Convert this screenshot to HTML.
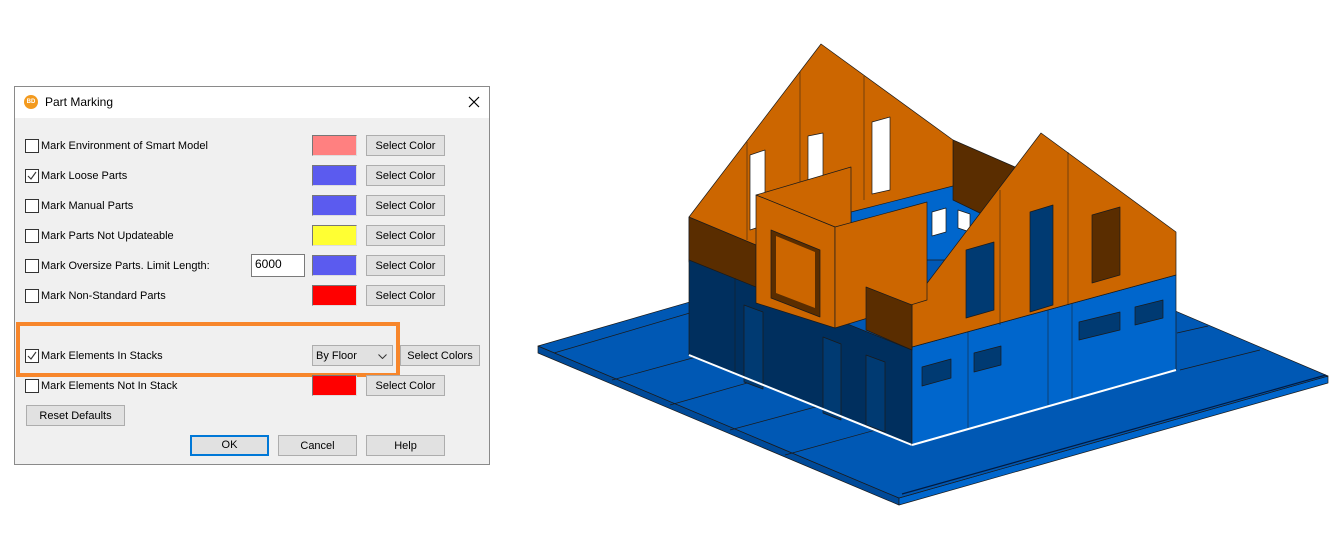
<!DOCTYPE html>
<html><head><meta charset="utf-8"><style>
body{margin:0;width:1338px;height:553px;background:#fff;position:relative;overflow:hidden;font-family:"Liberation Sans",sans-serif;font-size:11px;color:#000}
.a{position:absolute}
.dlg{left:14px;top:86px;width:476px;height:379px;background:#f0f0f0;border:1px solid #8a8a8a;box-sizing:border-box}
.tb{left:0;top:0;width:474px;height:31px;background:#fff}
.cb{width:12px;height:12px;border:1px solid #333;background:#fff}
.sw{width:43px;height:19px;border:1px solid #777;border-right-color:#ddd;border-bottom-color:#ddd}
.btn{height:21px;border:1px solid #adadad;background:#e1e1e1;text-align:center;line-height:20px;box-sizing:border-box}
.lbl{line-height:14px}
</style></head><body>
<div class="a dlg">
 <div class="a tb"></div>
 <div class="a" style="left:9px;top:8px;width:14px;height:14px;border-radius:50%;background:#f39a1e;color:#fff;font-size:6px;font-weight:bold;text-align:center;line-height:14px">BD</div>
 <div class="a" style="left:30px;top:8px;font-size:12px">Part Marking</div>
 <svg class="a" style="left:453px;top:9px" width="12" height="12"><path d="M1 1L11 11M11 1L1 11" stroke="#000" stroke-width="1.2"/></svg>
</div>
<div class="a cb" style="left:25px;top:139px"></div><div class="a lbl" style="left:41px;top:139px">Mark Environment of Smart Model</div>
<div class="a sw" style="left:312px;top:135px;background:#ff8080"></div><div class="a btn" style="left:366px;top:135px;width:79px">Select Color</div>
<div class="a cb" style="left:25px;top:169px"><svg width="12" height="12" style="position:absolute;left:0;top:0"><path d="M2 6L5 9L10 2" stroke="#333" fill="none" stroke-width="1.1"/></svg></div><div class="a lbl" style="left:41px;top:169px">Mark Loose Parts</div>
<div class="a sw" style="left:312px;top:165px;background:#5b5bef"></div><div class="a btn" style="left:366px;top:165px;width:79px">Select Color</div>
<div class="a cb" style="left:25px;top:199px"></div><div class="a lbl" style="left:41px;top:199px">Mark Manual Parts</div>
<div class="a sw" style="left:312px;top:195px;background:#5b5bef"></div><div class="a btn" style="left:366px;top:195px;width:79px">Select Color</div>
<div class="a cb" style="left:25px;top:229px"></div><div class="a lbl" style="left:41px;top:229px">Mark Parts Not Updateable</div>
<div class="a sw" style="left:312px;top:225px;background:#ffff33"></div><div class="a btn" style="left:366px;top:225px;width:79px">Select Color</div>
<div class="a cb" style="left:25px;top:259px"></div><div class="a lbl" style="left:41px;top:259px">Mark Oversize Parts. Limit Length:</div>
<div class="a" style="left:251px;top:254px;width:54px;height:23px;background:#fff;border:1px solid #7a7a7a;box-sizing:border-box;padding:2px 3px;font-size:12px">6000</div>
<div class="a sw" style="left:312px;top:255px;background:#5b5bef"></div><div class="a btn" style="left:366px;top:255px;width:79px">Select Color</div>
<div class="a cb" style="left:25px;top:289px"></div><div class="a lbl" style="left:41px;top:289px">Mark Non-Standard Parts</div>
<div class="a sw" style="left:312px;top:285px;background:#ff0000"></div><div class="a btn" style="left:366px;top:285px;width:79px">Select Color</div>
<div class="a" style="left:16px;top:322px;width:384px;height:55px;border:4px solid #f7862b;box-sizing:border-box"></div>
<div class="a cb" style="left:25px;top:349px"><svg width="12" height="12" style="position:absolute;left:0;top:0"><path d="M2 6L5 9L10 2" stroke="#333" fill="none" stroke-width="1.1"/></svg></div><div class="a lbl" style="left:41px;top:349px">Mark Elements In Stacks</div>
<div class="a btn" style="left:312px;top:345px;width:81px;text-align:left;padding-left:3px">By Floor<svg class="a" style="right:5px;top:8px" width="9" height="5"><path d="M0.5 0.5L4.5 4.5L8.5 0.5" stroke="#333" fill="none"/></svg></div>
<div class="a btn" style="left:400px;top:345px;width:80px">Select Colors</div>
<div class="a cb" style="left:25px;top:379px"></div><div class="a lbl" style="left:41px;top:379px">Mark Elements Not In Stack</div>
<div class="a sw" style="left:312px;top:375px;background:#ff0000"></div><div class="a btn" style="left:366px;top:375px;width:79px">Select Color</div>
<div class="a btn" style="left:26px;top:405px;width:99px">Reset Defaults</div>
<div class="a btn" style="left:190px;top:435px;width:79px;border:2px solid #0078d7;line-height:17px">OK</div>
<div class="a btn" style="left:278px;top:435px;width:79px">Cancel</div>
<div class="a btn" style="left:366px;top:435px;width:79px">Help</div>

<svg class="a" style="left:0;top:0" width="1338" height="553" viewBox="0 0 1338 553">
<g stroke="#1a1a1a" stroke-width="0.7" stroke-linejoin="round">
 <polygon points="538,353 899,505 899,498 538,346" fill="#004a99"/>
 <polygon points="899,505 1328,383 1328,376 899,498" fill="#0066cc"/>
 <polygon points="538,346 899,498 1328,376 966,222" fill="#0058b4"/>
 <line x1="902" y1="494" x2="1326" y2="375" stroke="#001a40" stroke-width="1.2"/>
 <line x1="554" y1="353" x2="700" y2="310"/><line x1="612" y1="380" x2="740" y2="345"/><line x1="670" y1="405" x2="800" y2="368"/><line x1="730" y1="430" x2="860" y2="395"/><line x1="785" y1="455" x2="912" y2="420"/>
 <line x1="1177" y1="333" x2="1208" y2="326"/><line x1="1180" y1="370" x2="1260" y2="350"/>
 <polygon points="851,185 992,185 992,260 851,260" fill="#0066cc"/>
 <polygon points="953,140 1015,167 1015,230 953,200" fill="#5a2d00"/>
 <polygon points="689,260 689,217 821,44 953,140 953,186 851,212 851,290" fill="#cc6600"/>
 <line x1="800" y1="72" x2="800" y2="230" stroke-width="0.5"/><line x1="747" y1="142" x2="747" y2="240" stroke-width="0.5"/><line x1="864" y1="76" x2="864" y2="200" stroke-width="0.5"/>
 <polygon points="689,217 756,245 756,290 689,262" fill="#5a2d00"/>
 <polygon points="750,155 765,150 765,225 750,230" fill="#fff"/>
 <polygon points="808,136 823,133 823,178 808,182" fill="#fff"/>
 <polygon points="872,122 890,117 890,190 872,194" fill="#fff"/>
 <polygon points="932,212 946,208 946,232 932,236" fill="#fff"/>
 <polygon points="958,210 970,214 970,232 958,228" fill="#fff"/>
 <polygon points="689,355 689,260 912,350 912,445" fill="#002f5e"/>
 <line x1="735" y1="278" x2="735" y2="375" stroke-width="0.5"/>
 <polygon points="744,305 763,312 763,389 744,382" fill="#003a72"/>
 <polygon points="823,337 841,344 841,420 823,413" fill="#003a72"/>
 <polygon points="866,355 885,362 885,432 866,425" fill="#003a72"/>
 <line x1="689" y1="355" x2="912" y2="445" stroke="#fff" stroke-width="2"/>
 <polygon points="912,445 912,347 1176,275 1176,370" fill="#0066cc"/>
 <line x1="968" y1="332" x2="968" y2="430" stroke-width="0.5"/><line x1="1048" y1="310" x2="1048" y2="405" stroke-width="0.5"/><line x1="1072" y1="303" x2="1072" y2="400" stroke-width="0.5"/>
 <polygon points="922,367 951,359 951,378 922,386" fill="#003a72"/>
 <polygon points="974,353 1001,346 1001,365 974,372" fill="#003a72"/>
 <polygon points="1079,322 1120,312 1120,330 1079,340" fill="#003a72"/>
 <polygon points="1135,307 1163,300 1163,318 1135,325" fill="#003a72"/>
 <line x1="912" y1="445" x2="1176" y2="370" stroke="#fff" stroke-width="2"/>
 <polygon points="912,347 912,303 1041,133 1176,232 1176,275" fill="#cc6600"/>
 <line x1="1000" y1="190" x2="1000" y2="325" stroke-width="0.5"/><line x1="1068" y1="152" x2="1068" y2="305" stroke-width="0.5"/>
 <polygon points="966,250 994,242 994,310 966,318" fill="#003a72"/>
 <polygon points="1030,212 1053,205 1053,305 1030,312" fill="#003a72"/>
 <polygon points="1092,215 1120,207 1120,275 1092,283" fill="#5a2d00"/>
 <polygon points="756,195 851,167 851,230 835,227" fill="#cc6600"/>
 <polygon points="756,195 835,227 835,328 756,303" fill="#cc6600"/>
 <polygon points="771,230 820,250 820,317 771,298" fill="#5a2d00"/>
 <polygon points="776,236 815,252 815,308 776,293" fill="#cc6600" stroke="none"/>
 <polygon points="835,227 927,202 927,300 835,328" fill="#cc6600"/>
 <polygon points="866,287 912,305 912,350 866,330" fill="#5a2d00"/>
</g>
</svg>
</body></html>
